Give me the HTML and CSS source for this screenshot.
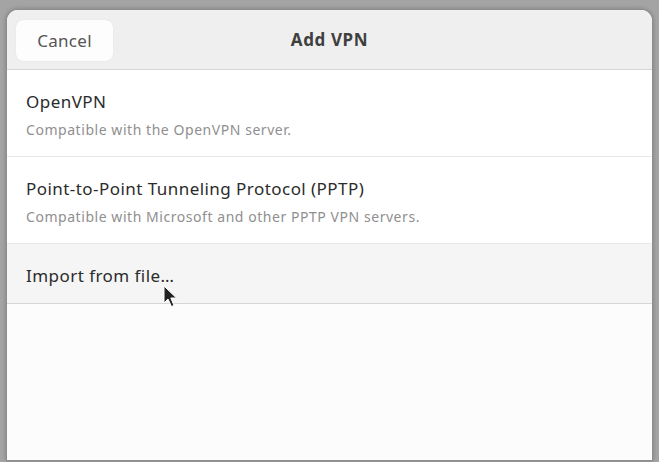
FILE: index.html
```html
<!DOCTYPE html>
<html>
<head>
<meta charset="utf-8">
<link rel="stylesheet" href="styles.css">
</head>
<body>
<div class="dialog">
  <div class="header">
    <button class="cancel">Cancel</button>
    <div class="title">Add VPN</div>
    <div class="spacer"></div>
  </div>
  <div class="list">
    <div class="row">
      <div class="row-title">OpenVPN</div>
      <div class="row-sub">Compatible with the OpenVPN server.</div>
    </div>
    <div class="row">
      <div class="row-title">Point-to-Point Tunneling Protocol (PPTP)</div>
      <div class="row-sub">Compatible with Microsoft and other PPTP VPN servers.</div>
    </div>
    <div class="row import">
      <div class="row-title">Import from file…</div>
      <svg class="cursor" width="15" height="24" viewBox="0 0 15 24">
        <path d="M1 1 L1 18 L5 14 L8.5 21.5 L11 20.5 L7.8 13 L13.5 13 Z" fill="#222" stroke="#fff" stroke-width="1"/>
      </svg>
    </div>
  </div>
  <div class="empty"></div>
</div>
</body>
</html>
```
FILE: styles.css
```css
html, body {
  margin: 0;
  padding: 0;
}
body {
  width: 659px;
  height: 462px;
  background: #a4a4a4;
  font-family: "Noto Sans", "DejaVu Sans", sans-serif;
  overflow: hidden;
  padding: 10px 7px 0 7px;
  box-sizing: border-box;
}
.dialog {
  width: 645px;
  height: 450px;
  background: #fbfbfb;
  border-radius: 11px 11px 0 0;
  display: flex;
  flex-direction: column;
  overflow: hidden;
  box-shadow: 0 0 0 1px #8e8e8e, 0 0 4px 1px rgba(0,0,0,0.25);
}
.header {
  height: 60px;
  flex: none;
  background: #efefef;
  border-bottom: 1px solid #d6d6d6;
  display: flex;
  align-items: center;
  padding: 0 9px;
  box-sizing: border-box;
}
.cancel {
  width: 97px;
  height: 41px;
  border: none;
  border-radius: 7px;
  background: #fdfdfd;
  color: #555;
  font-family: inherit;
  font-size: 17px;
  letter-spacing: 0.3px;
  padding: 0;
  margin-top: 1px;
  box-shadow: 0 0 1px rgba(0,0,0,0.15);
}
.title {
  flex: 1;
  text-align: center;
  font-weight: bold;
  font-size: 17px;
  letter-spacing: 0.6px;
  color: #3f3f3f;
}
.spacer {
  width: 97px;
}
.list {
  background: #fff;
  display: flex;
  flex-direction: column;
  flex: none;
}
.row {
  height: 87px;
  box-sizing: border-box;
  border-bottom: 1px solid #e9e9e9;
  padding: 21px 19px 0 19px;
  position: relative;
}
.row-title {
  font-size: 17px;
  letter-spacing: 0.45px;
  color: #2b2b2b;
  line-height: 22px;
}
.row-sub {
  font-size: 14px;
  letter-spacing: 0.55px;
  color: #8f8f8f;
  line-height: 18px;
  margin-top: 8px;
}
.import {
  height: 60px;
  background: #f5f5f5;
  border-bottom: 1px solid #d6d6d6;
}
.cursor {
  position: absolute;
  left: 156px;
  top: 41px;
}
.empty {
  flex: 1;
  background: #fcfcfc;
}
```
